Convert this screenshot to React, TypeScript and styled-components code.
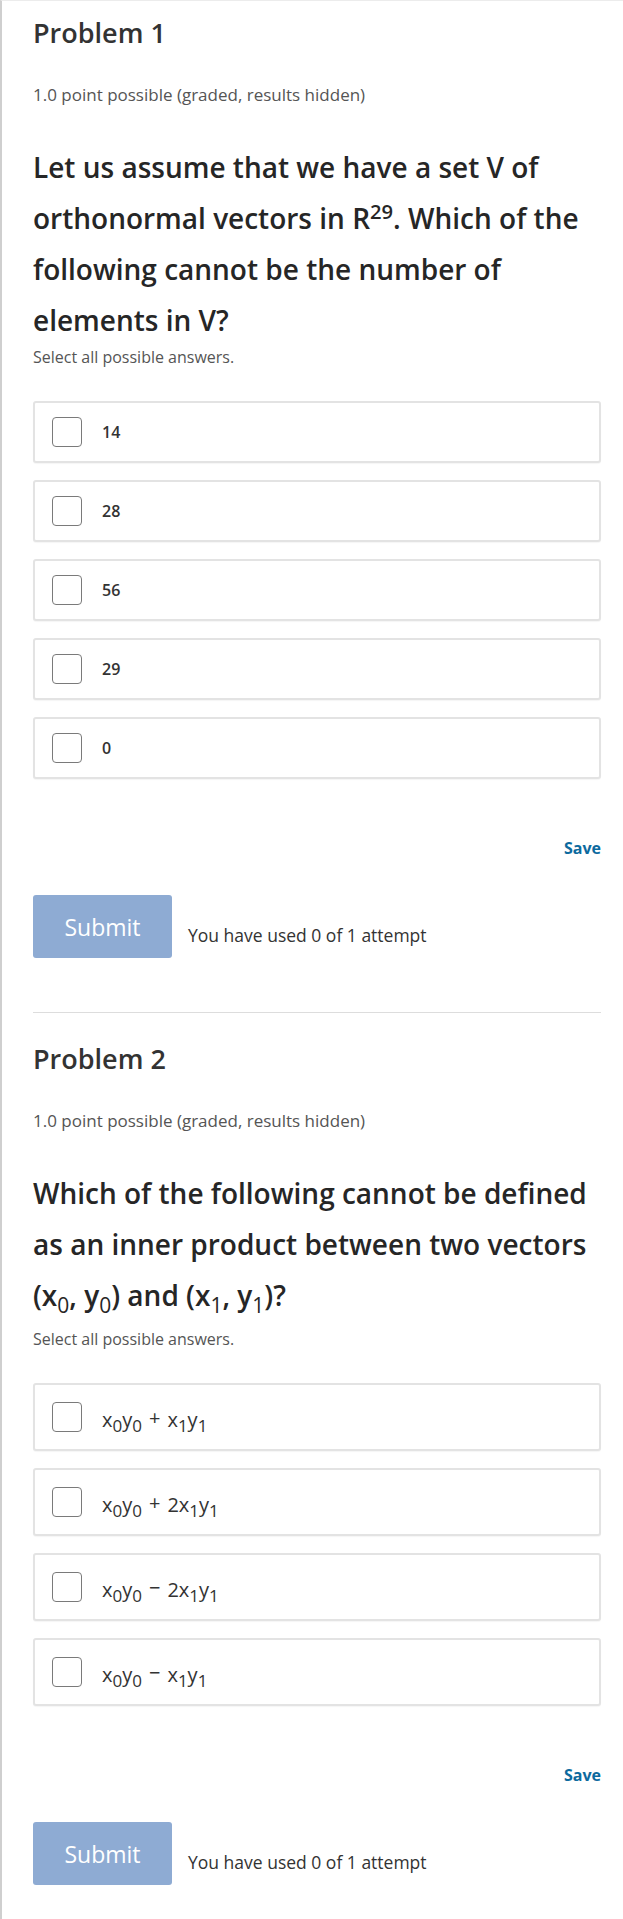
import React from "react";
import styled, { createGlobalStyle } from "styled-components";

const GlobalStyle = createGlobalStyle`
  html, body {
    margin: 0;
    padding: 0;
    background: #ffffff;
  }
  body {
    font-family: "Open Sans", "Noto Sans", sans-serif;
    color: #333333;
  }
  sub, sup {
    line-height: 0;
  }
`;

const Page = styled.main`
  width: 623px;
  box-sizing: border-box;
  min-height: 1919px;
  border-left: 2px solid #cfcfcf;
  border-top: 1px solid #ececec;
  padding: 15px 22px 30px 31px;
`;

const Section = styled.section`
  display: flex;
  flex-direction: column;
`;

const Heading = styled.h2`
  margin: 0;
  font-size: 27px;
  line-height: 34px;
  font-weight: 600;
  color: #333333;
`;

const Meta = styled.div`
  margin-top: 35px;
  font-size: 17px;
  line-height: 20px;
  color: #555555;
`;

const Question = styled.p`
  margin: 37px 0 0;
  font-size: 28px;
  line-height: 51px;
  font-weight: 600;
  color: #262626;

  sup {
    font-size: 0.72em;
  }
  sub {
    font-size: 0.75em;
    font-weight: 500;
  }
`;

const Hint = styled.div<{ $gap: number }>`
  margin-top: ${(p) => p.$gap}px;
  font-size: 16px;
  line-height: 18px;
  color: #555555;
`;

const OptionList = styled.div`
  margin-top: 35px;
  display: flex;
  flex-direction: column;
  gap: 17px;
`;

const Option = styled.label<{ $tall?: boolean }>`
  display: flex;
  align-items: center;
  gap: 20px;
  height: ${(p) => (p.$tall ? 68 : 62)}px;
  box-sizing: border-box;
  padding: 0 17px;
  border: 2px solid #e3e3e3;
  border-radius: 3px;
  box-shadow: 0 1px 1px rgba(0, 0, 0, 0.04);
  background: #ffffff;
`;

const Box = styled.span`
  width: 30px;
  height: 30px;
  box-sizing: border-box;
  flex: none;
  border: 1.5px solid #7a7a7a;
  border-radius: 4px;
`;

const OptionText = styled.span`
  font-size: 16px;
  font-weight: 600;
  color: #333333;
`;

const MathText = styled.span`
  font-size: 20px;
  font-weight: 400;
  color: #333333;
  padding-top: 4px;

  sub {
    font-size: 0.85em;
  }
`;

const Op = styled.span`
  display: inline-block;
  margin: 0 7px;
  position: relative;
  top: -2px;
`;

const SaveRow = styled.div`
  margin-top: 59px;
  display: flex;
  justify-content: flex-end;
`;

const SaveLink = styled.span`
  font-size: 16px;
  line-height: 20px;
  font-weight: 700;
  color: #0d6a9e;
`;

const Actions = styled.div`
  margin-top: 37px;
  display: flex;
  align-items: center;
  gap: 16px;
`;

const SubmitButton = styled.button`
  width: 139px;
  height: 63px;
  border: none;
  border-radius: 3px;
  background: #8eabd3;
  color: #ffffff;
  font-family: "Open Sans", sans-serif;
  font-size: 23px;
  font-weight: 400;
  padding: 0;
`;

const Attempts = styled.span`
  margin-top: 16px;
  font-size: 17.5px;
  font-weight: 500;
  color: #333333;
`;

const Divider = styled.hr`
  margin: 54px 0 29px;
  border: none;
  border-top: 1px solid #dddddd;
`;

const M = ({ n }: { n: string }) => <sub>{n}</sub>;

type ProblemProps = {
  title: string;
  question: React.ReactNode;
  options: React.ReactNode[];
  math?: boolean;
};

const Problem: React.FC<ProblemProps> = ({ title, question, options, math }) => (
  <Section>
    <Heading>{title}</Heading>
    <Meta>1.0 point possible (graded, results hidden)</Meta>
    <Question>{question}</Question>
    <Hint $gap={math ? 9 : 2}>Select all possible answers.</Hint>
    <OptionList>
      {options.map((o, i) => (
        <Option key={i} $tall={math}>
          <Box />
          {math ? <MathText>{o}</MathText> : <OptionText>{o}</OptionText>}
        </Option>
      ))}
    </OptionList>
    <SaveRow>
      <SaveLink>Save</SaveLink>
    </SaveRow>
    <Actions>
      <SubmitButton disabled>Submit</SubmitButton>
      <Attempts>You have used 0 of 1 attempt</Attempts>
    </Actions>
  </Section>
);

const mathOptions = [
  <>x<M n="0" />y<M n="0" /><Op>+</Op>x<M n="1" />y<M n="1" /></>,
  <>x<M n="0" />y<M n="0" /><Op>+</Op>2x<M n="1" />y<M n="1" /></>,
  <>x<M n="0" />y<M n="0" /><Op>−</Op>2x<M n="1" />y<M n="1" /></>,
  <>x<M n="0" />y<M n="0" /><Op>−</Op>x<M n="1" />y<M n="1" /></>,
];

export default function App() {
  return (
    <>
      <GlobalStyle />
      <Page>
        <Problem
          title="Problem 1"
          question={
            <>
              Let us assume that we have a set V of orthonormal vectors in R
              <sup>29</sup>. Which of the following cannot be the number of
              elements in V?
            </>
          }
          options={["14", "28", "56", "29", "0"]}
        />
        <Divider />
        <Problem
          title="Problem 2"
          math
          question={
            <>
              Which of the following cannot be defined as an inner product
              between two vectors (x<sub>0</sub>, y<sub>0</sub>) and (x
              <sub>1</sub>, y<sub>1</sub>)?
            </>
          }
          options={mathOptions}
        />
      </Page>
    </>
  );
}
